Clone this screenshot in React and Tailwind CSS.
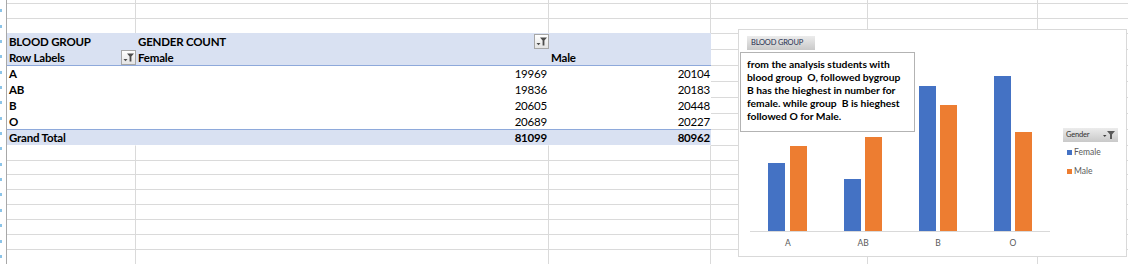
import React from "react";

const FONT = { fontFamily: "Lato, 'Open Sans', sans-serif" };

function FilterIcon() {
  return (
    <svg width="13" height="13" viewBox="0 0 13 13">
      <path d="M5 2.5h7l-2.6 3V10.5H7.6V5.5z" fill="#4d4d4d" />
      <path d="M1.5 8h4l-2 2.2z" fill="#4d4d4d" />
    </svg>
  );
}

function FilterButton() {
  return (
    <div className="w-[15px] h-[15px] border border-[#a6a6a6] bg-gradient-to-b from-[#ffffff] to-[#e4e4e4] flex items-center justify-center">
      <FilterIcon />
    </div>
  );
}

const G = "border-[#dadada]";

function GridCells() {
  return (
    <>
      <div className={`w-[157px] shrink-0 border-t border-r ${G}`} />
      <div className={`w-[170px] shrink-0 border-t border-r ${G}`} />
      <div className={`flex-1 border-t ${G}`} />
    </>
  );
}

function BlankRow() {
  return (
    <div className="flex h-[16px]">
      <div className={`w-[129px] shrink-0 border-t border-r ${G}`} />
      <div className={`w-[413px] shrink-0 border-t border-r ${G}`} />
      <div className={`w-[162px] shrink-0 border-t border-r ${G}`} />
      <GridCells />
    </div>
  );
}

function PivotRow({ topClass, bgClass, children }) {
  return (
    <div className="flex h-[16px]">
      <div
        className={`w-[704px] shrink-0 border-t ${topClass} ${bgClass} grid grid-cols-[129px_413px_162px] text-[11.5px] tracking-[-0.2px] leading-[15px] text-black`}
      >
        {children}
      </div>
      <GridCells />
    </div>
  );
}

function DataRow({ label, f, m, top }) {
  return (
    <PivotRow topClass={top} bgClass="bg-white">
      <div className="pl-[2px] font-bold flex items-center">{label}</div>
      <div className="pr-[2px] flex items-center justify-end">{f}</div>
      <div className="pr-[1px] flex items-center justify-end">{m}</div>
    </PivotRow>
  );
}

function Chart() {
  const base = 231;
  const bars = [
    { x: 768, top: 163, c: "#4472c4" },
    { x: 790, top: 146, c: "#ed7d31" },
    { x: 844, top: 179, c: "#4472c4" },
    { x: 865, top: 137, c: "#ed7d31" },
    { x: 919, top: 86, c: "#4472c4" },
    { x: 940, top: 105, c: "#ed7d31" },
    { x: 994, top: 76, c: "#4472c4" },
    { x: 1015, top: 132, c: "#ed7d31" },
  ];
  const labels = [
    { x: 788, t: "A" },
    { x: 863, t: "AB" },
    { x: 938, t: "B" },
    { x: 1013, t: "O" },
  ];
  return (
    <div className="absolute left-[738px] top-[29px] w-[389px] h-[228px] bg-white border border-[#d9d9d9]" style={FONT}>
      <svg className="absolute left-0 top-0" width="387" height="226" viewBox="739 30 387 226">
        {bars.map((b, i) => (
          <rect key={i} x={b.x} y={b.top} width="17" height={base - b.top} fill={b.c} />
        ))}
        <rect x="750" y={base} width="300" height="1" fill="#d9d9d9" />
        {labels.map((l) => (
          <text key={l.t} x={l.x} y="246" textAnchor="middle" fontSize="8.5" fill="#595959" fontFamily="Lato, sans-serif">
            {l.t}
          </text>
        ))}
      </svg>

      {/* BLOOD GROUP field button */}
      <div className="absolute left-[8px] top-[6px] w-[68px] h-[14px] bg-gradient-to-b from-[#ececec] to-[#c9c9c9] flex items-center pl-[4px] text-[7.5px] text-[#1f2f4f] tracking-[-0.2px]">
        BLOOD GROUP
      </div>

      {/* Text box */}
      <div className="absolute left-[1px] top-[22px] w-[175px] h-[80px] bg-white border border-[#b3b3b3] pl-[6px] pt-[5px] text-[10.3px] leading-[13px] font-bold text-black whitespace-pre">
        {"from the analysis students with\nblood group  O, followed bygroup\nB has the hieghest in number for\nfemale. while group  B is hieghest\nfollowed O for Male."}
      </div>

      {/* Legend */}
      <div className="absolute left-[324px] top-[98px] flex flex-col">
        <div className="w-[55px] h-[14px] bg-gradient-to-b from-[#ececec] to-[#c9c9c9] flex items-center justify-between pl-[3px] pr-[2px] text-[7.5px] text-[#333] tracking-[-0.2px]">
          <span>Gender</span>
          <svg width="14" height="10" viewBox="0 0 14 10">
            <path d="M1 5h3.5l-1.75 2z" fill="#404040" />
            <path d="M5 1h8l-3 3.5V9H8V4.5z" fill="#595959" />
          </svg>
        </div>
        <div className="flex flex-col gap-[8px] pl-[4px] mt-[5px] text-[8.5px] leading-[11px] text-[#595959]">
          <div className="flex items-center gap-[2px]">
            <span className="w-[5px] h-[5px] bg-[#4472c4]" />
            <span>Female</span>
          </div>
          <div className="flex items-center gap-[2px]">
            <span className="w-[5px] h-[5px] bg-[#ed7d31]" />
            <span>Male</span>
          </div>
        </div>
      </div>
    </div>
  );
}

export default function App() {
  const blankTop = Array.from({ length: 2 });
  const blankBottom = Array.from({ length: 7 });
  const marks = Array.from({ length: 17 });
  return (
    <div className="relative w-[1128px] h-[264px] overflow-hidden bg-white flex" style={FONT}>
      {/* row header strip */}
      <div className="w-[7px] shrink-0 border-r border-[#a8a8a8] flex flex-col pt-[3px]">
        {marks.map((_, i) => (
          <div key={i} className="h-[16px] flex items-center">
            <span className="w-[2px] h-[3px] bg-[#8cc4e8]" />
          </div>
        ))}
      </div>

      <div className="flex-1 flex flex-col">
        {/* partial top row */}
        <div className="flex h-[3px]">
          <div className={`w-[129px] shrink-0 border-r ${G}`} />
          <div className={`w-[413px] shrink-0 border-r ${G}`} />
          <div className={`w-[162px] shrink-0 border-r ${G}`} />
          <div className={`w-[157px] shrink-0 border-r ${G}`} />
          <div className={`w-[170px] shrink-0 border-r ${G}`} />
          <div className="flex-1" />
        </div>
        {blankTop.map((_, i) => (
          <BlankRow key={`t${i}`} />
        ))}

        <PivotRow topClass="border-[#d9e1f2]" bgClass="bg-[#d9e1f2]">
          <div className="pl-[2px] font-bold flex items-center">BLOOD GROUP</div>
          <div className="pl-[2px] font-bold flex items-center justify-between">
            <span>GENDER COUNT</span>
            <FilterButton />
          </div>
          <div />
        </PivotRow>
        <PivotRow topClass="border-[#d9e1f2]" bgClass="bg-[#d9e1f2]">
          <div className="pl-[2px] font-bold flex items-center justify-between">
            <span>Row Labels</span>
            <FilterButton />
          </div>
          <div className="pl-[2px] font-bold flex items-center">Female</div>
          <div className="pl-[2px] font-bold flex items-center">Male</div>
        </PivotRow>

        <DataRow label="A" f="19969" m="20104" top="border-[#8ea9db]" />
        <DataRow label="AB" f="19836" m="20183" top="border-white" />
        <DataRow label="B" f="20605" m="20448" top="border-white" />
        <DataRow label="O" f="20689" m="20227" top="border-white" />

        <PivotRow topClass="border-[#8ea9db]" bgClass="bg-[#d9e1f2]">
          <div className="pl-[2px] font-bold flex items-center">Grand Total</div>
          <div className="pr-[2px] font-bold flex items-center justify-end">81099</div>
          <div className="pr-[1px] font-bold flex items-center justify-end">80962</div>
        </PivotRow>

        <div className="flex h-[16px]">
          <div className="w-[129px] shrink-0 border-t border-white border-r border-r-[#dadada]" />
          <div className="w-[413px] shrink-0 border-t border-white border-r border-r-[#dadada]" />
          <div className="w-[162px] shrink-0 border-t border-white border-r border-r-[#dadada]" />
          <GridCells />
        </div>
        {blankBottom.map((_, i) => (
          <BlankRow key={`b${i}`} />
        ))}
      </div>

      <Chart />
    </div>
  );
}
